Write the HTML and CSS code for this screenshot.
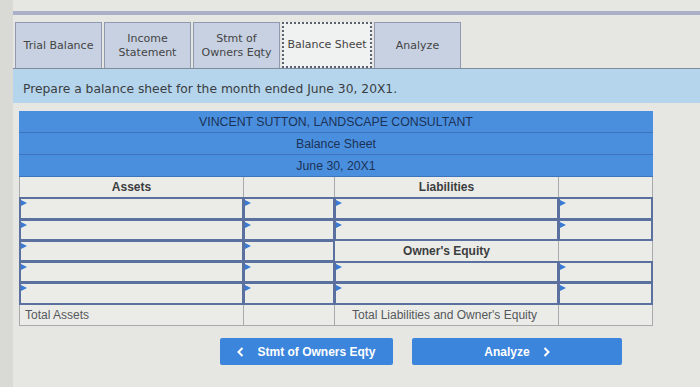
FILE: index.html
```html
<!DOCTYPE html>
<html lang="en">
  <head>
    <meta charset="UTF-8" />
    <title>Balance Sheet</title>
    <link rel="stylesheet" href="styles.css">
  </head>
  <body>
    <div class="screen">
      <div class="topbar"></div>

      <nav class="tabs">
        <div class="tab">Trial Balance</div>
        <div class="tab">Income<br />Statement</div>
        <div class="tab">Stmt of<br />Owners Eqty</div>
        <div class="tab active">Balance Sheet</div>
        <div class="tab">Analyze</div>
      </nav>

      <div class="band">Prepare a balance sheet for the month ended June 30, 20X1.</div>

      <section class="sheet">
        <div class="head">VINCENT SUTTON, LANDSCAPE CONSULTANT</div>
        <div class="head">Balance Sheet</div>
        <div class="head">June 30, 20X1</div>

        <div class="grid">
          <!-- row: section titles -->
          <div class="cell title">Assets</div>
          <div class="cell"></div>
          <div class="cell title">Liabilities</div>
          <div class="cell"></div>

          <div class="cell in"></div>
          <div class="cell in"></div>
          <div class="cell in"></div>
          <div class="cell in"></div>

          <div class="cell in"></div>
          <div class="cell in"></div>
          <div class="cell in"></div>
          <div class="cell in"></div>

          <div class="cell in"></div>
          <div class="cell in"></div>
          <div class="cell title">Owner's Equity</div>
          <div class="cell"></div>

          <div class="cell in"></div>
          <div class="cell in"></div>
          <div class="cell in"></div>
          <div class="cell in"></div>

          <div class="cell in"></div>
          <div class="cell in"></div>
          <div class="cell in"></div>
          <div class="cell in"></div>

          <!-- totals -->
          <div class="cell total">Total Assets</div>
          <div class="cell"></div>
          <div class="cell total right">Total Liabilities and Owner's Equity</div>
          <div class="cell"></div>
        </div>
      </section>

      <div class="actions">
        <button class="btn prev">
          <svg width="7" height="10" viewBox="0 0 7 10"><polyline points="5.5,1 1.5,5 5.5,9" fill="none" stroke="#fff" stroke-width="2" /></svg>
          Stmt of Owners Eqty
        </button>
        <button class="btn next">
          Analyze
          <svg width="7" height="10" viewBox="0 0 7 10"><polyline points="1.5,1 5.5,5 1.5,9" fill="none" stroke="#fff" stroke-width="2" /></svg>
        </button>
      </div>
    </div>
  </body>
</html>
```

FILE: styles.css
```css
:root {
  --page: #e6e7e2;
  --tab: #c7d1e2;
  --band: #b5d5ec;
  --head: #4a8fde;
  --btn: #3c85dc;
  --cell: #ebece8;
  --line: #a8aaac;
  --input: #5a71a0;
  --font: "Liberation Sans", Arial, sans-serif;
}

* {
  box-sizing: border-box;
}

html,
body {
  margin: 0;
  height: 100%;
}

body {
  background: #d9dad5;
  font-family: var(--font);
  color: #333;
}

.screen {
  margin-left: 13px;
  min-height: 100%;
  padding-top: 11px;
  background: var(--page);
}

.topbar {
  height: 4px;
  background: #a9b0c8;
}

/* tab strip */
.tabs {
  display: flex;
  gap: 2px;
  height: 47px;
  margin-top: 7px;
  padding-left: 2px;
  border-bottom: 1px solid #7f8ca0;
}

.tab {
  display: flex;
  align-items: center;
  justify-content: center;
  width: 87px;
  background: var(--tab);
  border: 1px solid #9099ad;
  border-bottom: none;
  font-family: "DejaVu Sans", sans-serif;
  font-size: 11px;
  line-height: 14px;
  text-align: center;
  color: #444;
}

.tab.active {
  width: 90px;
  background: #f0f1f1;
  border: 2px dotted #5b6070;
}

.band {
  height: 34px;
  padding: 13px 0 0 10px;
  background: var(--band);
  font-family: "DejaVu Sans", sans-serif;
  font-size: 12.3px;
  color: #3a3d42;
}

/* balance sheet */
.sheet {
  width: 634px;
  margin: 8px 0 0 6px;
}

.head {
  height: 22px;
  line-height: 22px;
  text-align: center;
  background: var(--head);
  border-bottom: 1px solid #3d74bc;
  font-size: 12.3px;
  color: #1b3256;
}

.grid {
  display: grid;
  grid-template-columns: 223px 90px 223px 93px;
  grid-auto-rows: 20.3px;
  gap: 1px;
  background: var(--line);
  border: 1px solid var(--line);
  border-top: none;
}

.cell {
  position: relative;
  background: var(--cell);
  font-size: 12px;
  line-height: 20px;
}

.cell.title {
  text-align: center;
  font-weight: 700;
  color: #3b3d40;
}

.cell.total {
  padding-left: 5px;
  color: #55585c;
}

.cell.total.right {
  padding-left: 17px;
}

.cell.in {
  box-shadow: 0 0 0 1px var(--input), inset 0 0 0 1px var(--input);
}

/* little pennant on each input */
.cell.in::before {
  content: "";
  position: absolute;
  top: 2px;
  left: 1px;
  border-left: 6px solid #3a7ad2;
  border-top: 3px solid transparent;
  border-bottom: 3px solid transparent;
}

.actions {
  display: flex;
  gap: 19px;
  margin-top: 12px;
  padding-left: 207px;
}

.btn {
  display: flex;
  align-items: center;
  justify-content: center;
  gap: 13px;
  height: 27px;
  border: none;
  border-radius: 2px;
  background: var(--btn);
  color: #fff;
  font-family: var(--font);
  font-size: 12px;
  font-weight: 700;
}

.btn.prev {
  width: 173px;
}

.btn.next {
  width: 210px;
}
```
